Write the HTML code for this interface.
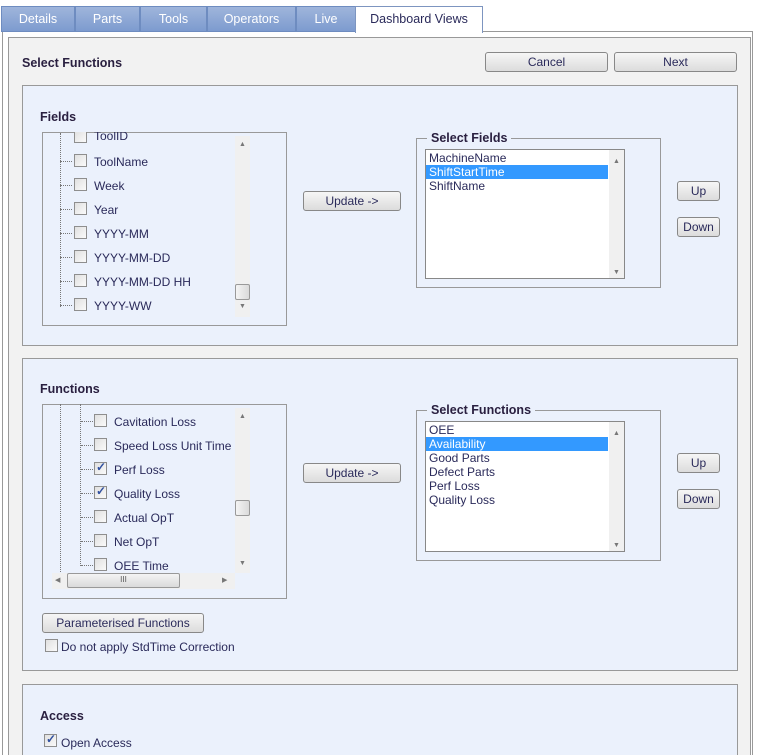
<!DOCTYPE html>
<html style="height:755px;overflow:hidden"><head><style>
*{box-sizing:border-box;margin:0;padding:0}
body{width:757px;height:755px;overflow:hidden;background:#fff;font-family:"Liberation Sans",sans-serif;font-size:12px;color:#2a2a5a;position:relative}
.a{position:absolute}
.tab{position:absolute;top:6px;height:26px;background:linear-gradient(#9fb5db,#7d9bcf);border:1px solid #6e8cc0;color:#fff;text-align:center;line-height:25px;font-size:12.5px}
.tab.sel{background:#fff;color:#2a2a5a;border-bottom:none;height:27px;border-color:#7d95c0}
.panel{position:absolute;left:22px;width:716px;background:#ebf1fc;border:1px solid #999}
.h{position:absolute;font-weight:bold;font-size:12.5px;color:#2a2040}
.btn{position:absolute;height:20px;border:1px solid #888;border-radius:3px;background:linear-gradient(#f6f6f6,#dcdcdc);text-align:center;line-height:19px;font-size:12px;color:#2a2a5a}
.box{position:absolute;border:1px solid #999;background:#ebf1fc}
.cb{position:absolute;width:13px;height:13px;border:1px solid #8e8e8e;background:linear-gradient(135deg,#e0e0e0,#fafafa)}
.ck::after{content:"✓";position:absolute;left:1px;top:-3px;font-size:12px;color:#3050a0;font-weight:bold}
.vs{position:absolute;width:15px;background:#f0f0f0}
.thumb{position:absolute;left:0;width:15px;height:16px;border:1px solid #999;border-radius:2px;background:linear-gradient(90deg,#f4f4f4,#dadada)}
.dl{position:absolute;border-left:1px dotted #777}
.dh{position:absolute;border-top:1px dotted #777;width:12px}
fieldset{position:absolute;border:1px solid #999}
.lg{position:absolute;background:#ebf1fc;font-weight:bold;font-size:12.5px;padding:0 4px;color:#2a2040}
.lb{position:absolute;background:#fff;border:1px solid #888}
.lb div{height:14px;line-height:15px;padding-left:3px}
.lb .s{background:#3399ff;color:#fff}
.arr{position:absolute;font-size:7px;color:#777}
.t span.a{margin-top:1px}
</style></head><body>
<div class="a" style="left:2px;top:31px;width:751px;height:730px;border:1px solid #999"></div>
<div class="tab" style="left:1px;width:74px">Details</div>
<div class="tab" style="left:75px;width:65px">Parts</div>
<div class="tab" style="left:140px;width:67px">Tools</div>
<div class="tab" style="left:207px;width:89px">Operators</div>
<div class="tab" style="left:296px;width:60px">Live</div>
<div class="tab sel" style="left:355px;width:128px">Dashboard Views</div>
<div class="a" style="left:8px;top:37px;width:743px;height:730px;border:1px solid #999;background:#f2f2f2"></div>
<div class="h" style="left:22px;top:56px">Select Functions</div>
<div class="btn" style="left:485px;top:52px;width:123px">Cancel</div>
<div class="btn" style="left:614px;top:52px;width:123px">Next</div>

<!-- Fields -->
<div class="panel" style="top:85px;height:261px"></div>
<div class="h" style="left:40px;top:110px">Fields</div>
<div class="box" style="left:42px;top:132px;width:245px;height:194px;overflow:hidden">
 <div class="dl" style="left:17px;top:0;height:174px"></div>
</div>
<div class="a t" style="left:42px;top:132px;width:245px;height:194px;overflow:hidden">
 <div class="a" style="left:32px;top:-2px;width:200px;height:14px"><div class="cb" style="left:0;top:0"></div><span class="a" style="left:20px;top:-2px">ToolID</span></div>
</div>
<div class="a t" style="left:42px;top:132px;width:200px;height:194px">
 <div class="dh" style="left:18px;top:29px"></div><div class="cb" style="left:32px;top:22px"></div><span class="a" style="left:52px;top:22px">ToolName</span>
 <div class="dh" style="left:18px;top:53px"></div><div class="cb" style="left:32px;top:46px"></div><span class="a" style="left:52px;top:46px">Week</span>
 <div class="dh" style="left:18px;top:77px"></div><div class="cb" style="left:32px;top:70px"></div><span class="a" style="left:52px;top:70px">Year</span>
 <div class="dh" style="left:18px;top:101px"></div><div class="cb" style="left:32px;top:94px"></div><span class="a" style="left:52px;top:94px">YYYY-MM</span>
 <div class="dh" style="left:18px;top:125px"></div><div class="cb" style="left:32px;top:118px"></div><span class="a" style="left:52px;top:118px">YYYY-MM-DD</span>
 <div class="dh" style="left:18px;top:149px"></div><div class="cb" style="left:32px;top:142px"></div><span class="a" style="left:52px;top:142px">YYYY-MM-DD HH</span>
 <div class="dh" style="left:18px;top:173px"></div><div class="cb" style="left:32px;top:166px"></div><span class="a" style="left:52px;top:166px">YYYY-WW</span>
</div>
<div class="vs" style="left:235px;top:136px;height:181px"><span class="arr" style="left:4px;top:5px">▲</span><div class="thumb" style="top:148px"></div><span class="arr" style="left:4px;top:167px">▼</span></div>
<div class="btn" style="left:303px;top:191px;width:98px">Update -&gt;</div>
<fieldset style="left:416px;top:138px;width:245px;height:150px"></fieldset>
<div class="lg" style="left:427px;top:131px">Select Fields</div>
<div class="lb" style="left:425px;top:149px;width:200px;height:130px">
 <div style="margin-top:1px">MachineName</div><div class="s" style="width:182px">ShiftStartTime</div><div>ShiftName</div>
 <div class="vs" style="right:0;top:0;height:128px"><span class="arr" style="left:4px;top:4px">▲</span><span class="arr" style="left:4px;top:115px">▼</span></div>
</div>
<div class="btn" style="left:677px;top:181px;width:43px">Up</div>
<div class="btn" style="left:677px;top:217px;width:43px">Down</div>

<!-- Functions -->
<div class="panel" style="top:358px;height:313px"></div>
<div class="h" style="left:40px;top:382px">Functions</div>
<div class="box" style="left:42px;top:404px;width:245px;height:195px"></div>
<div class="a t" style="left:42px;top:404px;width:200px;height:170px;overflow:hidden">
 <div class="dl" style="left:18px;top:0;height:170px"></div>
 <div class="dl" style="left:38px;top:0;height:162px"></div>
 <div class="dh" style="left:39px;top:17px"></div><div class="cb" style="left:52px;top:10px"></div><span class="a" style="left:72px;top:10px">Cavitation Loss</span>
 <div class="dh" style="left:39px;top:41px"></div><div class="cb" style="left:52px;top:34px"></div><span class="a" style="left:72px;top:34px;white-space:nowrap">Speed Loss Unit Time</span>
 <div class="dh" style="left:39px;top:65px"></div><div class="cb ck" style="left:52px;top:58px"></div><span class="a" style="left:72px;top:58px">Perf Loss</span>
 <div class="dh" style="left:39px;top:89px"></div><div class="cb ck" style="left:52px;top:82px"></div><span class="a" style="left:72px;top:82px">Quality Loss</span>
 <div class="dh" style="left:39px;top:113px"></div><div class="cb" style="left:52px;top:106px"></div><span class="a" style="left:72px;top:106px">Actual OpT</span>
 <div class="dh" style="left:39px;top:137px"></div><div class="cb" style="left:52px;top:130px"></div><span class="a" style="left:72px;top:130px">Net OpT</span>
 <div class="dh" style="left:39px;top:161px"></div><div class="cb" style="left:52px;top:154px"></div><span class="a" style="left:72px;top:154px">OEE Time</span>
</div>
<div class="vs" style="left:235px;top:408px;height:165px"><span class="arr" style="left:4px;top:5px">▲</span><div class="thumb" style="top:92px"></div><span class="arr" style="left:4px;top:152px">▼</span></div>
<div class="a" style="left:52px;top:573px;width:183px;height:16px;background:#f0f0f0"><span class="arr" style="left:3px;top:3px">◀</span><div class="a" style="left:15px;top:0;width:113px;height:15px;border:1px solid #999;border-radius:2px;background:linear-gradient(#f4f4f4,#dadada);font-size:8px;text-align:center;line-height:12px;color:#555">III</div><span class="arr" style="left:170px;top:3px">▶</span></div>
<div class="btn" style="left:303px;top:463px;width:98px">Update -&gt;</div>
<fieldset style="left:416px;top:410px;width:245px;height:151px"></fieldset>
<div class="lg" style="left:427px;top:403px">Select Functions</div>
<div class="lb" style="left:425px;top:421px;width:200px;height:131px">
 <div style="margin-top:1px">OEE</div><div class="s" style="width:182px">Availability</div><div>Good Parts</div><div>Defect Parts</div><div>Perf Loss</div><div>Quality Loss</div>
 <div class="vs" style="right:0;top:0;height:129px"><span class="arr" style="left:4px;top:4px">▲</span><span class="arr" style="left:4px;top:116px">▼</span></div>
</div>
<div class="btn" style="left:677px;top:453px;width:43px">Up</div>
<div class="btn" style="left:677px;top:489px;width:43px">Down</div>
<div class="btn" style="left:42px;top:613px;width:162px">Parameterised Functions</div>
<div class="cb" style="left:45px;top:639px"></div><span class="a" style="left:61px;top:640px">Do not apply StdTime Correction</span>

<!-- Access -->
<div class="panel" style="top:684px;height:90px"></div>
<div class="h" style="left:40px;top:709px">Access</div>
<div class="cb ck" style="left:44px;top:734px"></div><span class="a" style="left:61px;top:736px">Open Access</span>
</body></html>
